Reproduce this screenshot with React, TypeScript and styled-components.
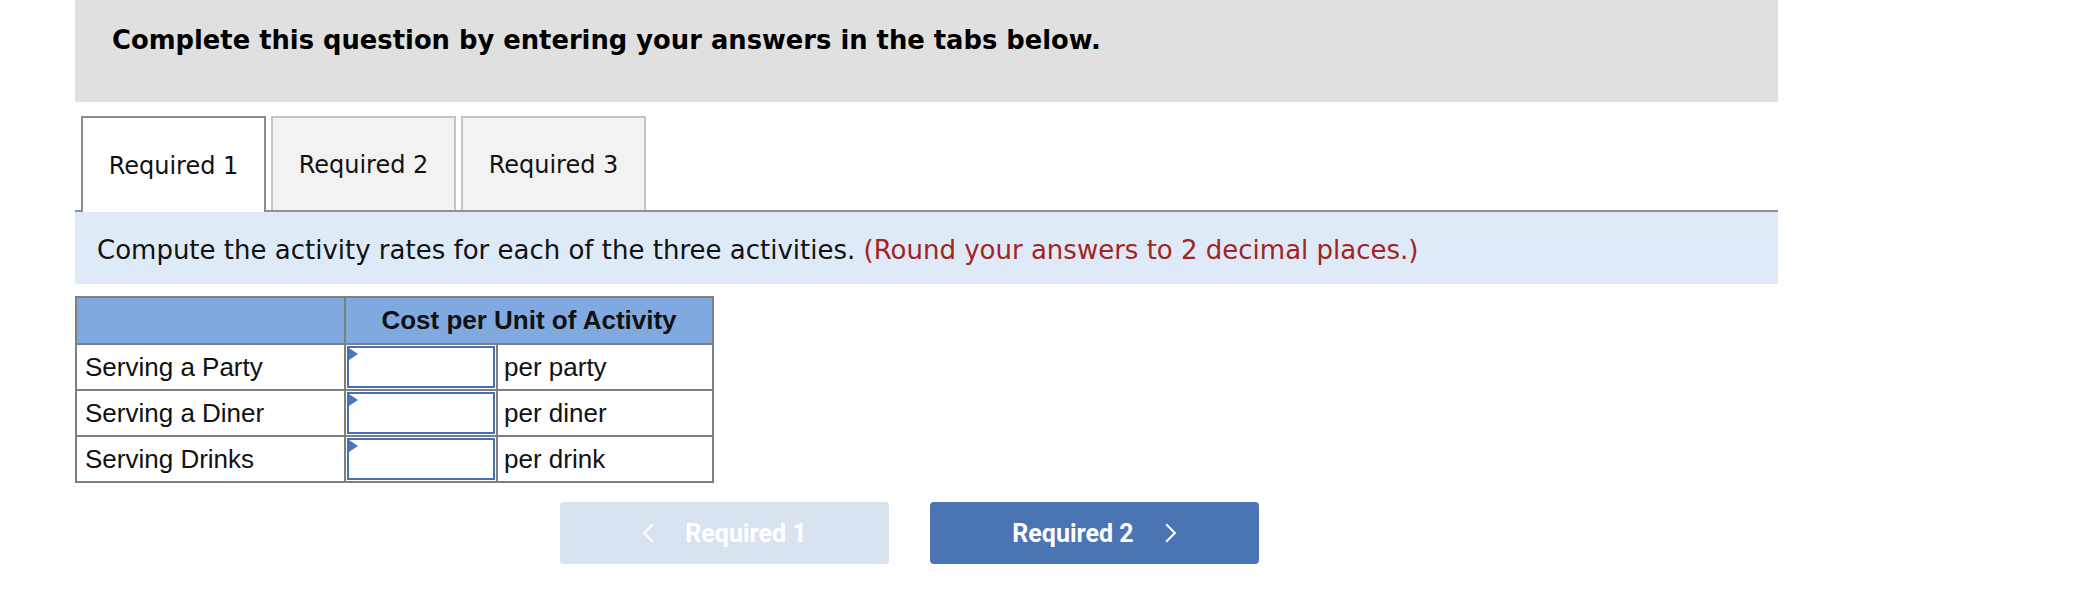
import { FC } from "react";
import styled, { createGlobalStyle } from "styled-components";

const GlobalStyle = createGlobalStyle`
    body {
        margin: 0;
        background: #ffffff;
        font-family: "DejaVu Sans", Verdana, sans-serif;
    }
`;

const rows = [
    { label: "Serving a Party", unit: "per party" },
    { label: "Serving a Diner", unit: "per diner" },
    { label: "Serving Drinks", unit: "per drink" },
];

const tabs = ["Required 1", "Required 2", "Required 3"];

const App: FC = () => {
    return (
        <>
            <GlobalStyle />
            <SPage>
                <SHeader>Complete this question by entering your answers in the tabs below.</SHeader>

                <STabBar>
                    {tabs.map((t, i) => (
                        <STab key={t} $active={i === 0}>{t}</STab>
                    ))}
                </STabBar>

                <SInstruction>
                    Compute the activity rates for each of the three activities.{" "}
                    <SRed>(Round your answers to 2 decimal places.)</SRed>
                </SInstruction>

                <STable>
                    <thead>
                        <tr>
                            <STh></STh>
                            <STh colSpan={2}>Cost per Unit of Activity</STh>
                        </tr>
                    </thead>
                    <tbody>
                        {rows.map((r) => (
                            <tr key={r.label}>
                                <SLabelCell>{r.label}</SLabelCell>
                                <SInputCell>
                                    <SInputWrap>
                                        <SInput type="text" />
                                    </SInputWrap>
                                </SInputCell>
                                <SUnitCell>{r.unit}</SUnitCell>
                            </tr>
                        ))}
                    </tbody>
                </STable>

                <SNav>
                    <SNavButton $disabled>
                        <SChevron viewBox="0 0 12 20"><path d="M10 2 L2 10 L10 18" /></SChevron>
                        Required 1
                    </SNavButton>
                    <SNavButton>
                        Required 2
                        <SChevron viewBox="0 0 12 20"><path d="M2 2 L10 10 L2 18" /></SChevron>
                    </SNavButton>
                </SNav>
            </SPage>
        </>
    );
};

export default App;

const SPage = styled.div`
    width: 1703px;
    margin-left: 75px;
`;

const SHeader = styled.div`
    height: 102px;
    box-sizing: border-box;
    background: #e0e0e0;
    padding: 25px 37px 0;
    font-weight: bold;
    font-size: 25.8px;
    color: #000;
`;

const STabBar = styled.div`
    display: flex;
    gap: 5px;
    margin-top: 14px;
    padding-left: 6px;
    border-bottom: 2px solid #8f9194;
    height: 94px;
`;

const STab = styled.div<{ $active?: boolean }>`
    width: 185px;
    height: ${(p) => (p.$active ? "96px" : "94px")};
    box-sizing: border-box;
    display: flex;
    align-items: center;
    justify-content: center;
    padding-top: 2px;
    font-size: 24px;
    color: #111;
    background: ${(p) => (p.$active ? "#ffffff" : "#f2f2f2")};
    border: 2px solid ${(p) => (p.$active ? "#8c8c8c" : "#c4c4c4")};
    border-bottom: none;
    position: relative;
    z-index: ${(p) => (p.$active ? 1 : 0)};
`;

const SInstruction = styled.div`
    height: 72px;
    box-sizing: border-box;
    background: #deeaf7;
    padding: 23px 22px 0;
    font-size: 26px;
    color: #111;
`;

const SRed = styled.span`
    color: #a3231f;
`;

const STable = styled.table`
    margin-top: 12px;
    border-collapse: collapse;
    font-family: "Liberation Sans", Arial, sans-serif;
    font-size: 26px;
    color: #111;
    border: 2px solid #7f7f7f;
`;

const STh = styled.th`
    background: #80aadf;
    height: 45px;
    border: 2px solid #7f7f7f;
    padding: 0;
    font-weight: bold;
    text-align: center;
    &:first-child {
        width: 267px;
    }
`;

const SLabelCell = styled.td`
    border: 2px solid #7f7f7f;
    height: 44px;
    padding: 0 8px;
    width: 251px;
`;

const SInputCell = styled.td`
    border: 2px solid #7f7f7f;
    padding: 1px;
    width: 148px;
`;

const SInputWrap = styled.div`
    position: relative;
    &::before {
        content: "";
        position: absolute;
        left: 2px;
        top: 2px;
        border-top: 6px solid transparent;
        border-bottom: 6px solid transparent;
        border-left: 9px solid #4a76bb;
    }
`;

const SInput = styled.input`
    display: block;
    width: 148px;
    height: 42px;
    box-sizing: border-box;
    border: 2px solid #4770b3;
    margin: 0;
    padding: 0 6px;
    font-size: 22px;
    outline: none;
`;

const SUnitCell = styled.td`
    border: 2px solid #7f7f7f;
    padding: 0 6px;
    width: 202px;
`;

const SNav = styled.div`
    display: flex;
    gap: 41px;
    margin-top: 19px;
    padding-left: 485px;
`;

const SNavButton = styled.div<{ $disabled?: boolean }>`
    width: 329px;
    height: 62px;
    border-radius: 4px;
    background: ${(p) => (p.$disabled ? "#d9e3f0" : "#4a74b3")};
    color: #ffffff;
    display: flex;
    align-items: center;
    justify-content: center;
    gap: 30px;
    font-family: Roboto, "Liberation Sans", sans-serif;
    font-weight: bold;
    font-size: 25px;
`;

const SChevron = styled.svg`
    width: 13px;
    height: 22px;
    fill: none;
    stroke: #ffffff;
    stroke-width: 2;
`;
